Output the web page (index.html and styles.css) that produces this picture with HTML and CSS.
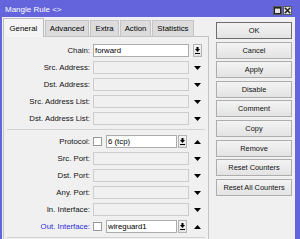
FILE: index.html
```html
<!DOCTYPE html>
<html>
<head>
<meta charset="utf-8">
<link rel="stylesheet" href="styles.css">
</head>
<body>
<div class="win">
  <div class="titlebar">
    <span class="title">Mangle Rule &lt;&gt;</span>
    <span class="tbtns">
      <span class="tb"><svg width="7" height="7" viewBox="0 0 7 7"><rect x="0.5" y="0.5" width="6" height="6" fill="none" stroke="#222" stroke-width="1"/><rect x="0" y="0" width="7" height="1.6" fill="#222"/></svg></span>
      <span class="tb"><svg width="7" height="7" viewBox="0 0 7 7"><path d="M0.8 0.8 L6.2 6.2 M6.2 0.8 L0.8 6.2" stroke="#222" stroke-width="1.6"/></svg></span>
    </span>
  </div>
  <div class="main">
    <div class="left">
      <div class="tabs">
        <div class="tab sel">General</div>
        <div class="tab">Advanced</div>
        <div class="tab">Extra</div>
        <div class="tab">Action</div>
        <div class="tab">Statistics</div>
      </div>
      <div class="panel">
        <div class="row">
          <span class="lbl">Chain:</span>
          <span class="ctl"><span class="inp active">forward</span></span>
          <span class="side"><span class="box"><svg width="5" height="7" viewBox="0 0 5 7"><rect x="1.5" y="0" width="2" height="2" fill="#000"/><path d="M0 2 H5 L2.5 5 Z" fill="#000"/><rect x="0" y="6" width="5" height="1" fill="#000"/></svg></span></span>
        </div>
        <div class="row">
          <span class="lbl">Src. Address:</span>
          <span class="ctl"><span class="inp"></span></span>
          <span class="side"><svg class="arr" width="7" height="4" viewBox="0 0 7 4"><path d="M0 0 H7 L3.5 4 Z" fill="#000"/></svg></span>
        </div>
        <div class="row">
          <span class="lbl">Dst. Address:</span>
          <span class="ctl"><span class="inp"></span></span>
          <span class="side"><svg class="arr" width="7" height="4" viewBox="0 0 7 4"><path d="M0 0 H7 L3.5 4 Z" fill="#000"/></svg></span>
        </div>
        <div class="row">
          <span class="lbl">Src. Address List:</span>
          <span class="ctl"><span class="inp"></span></span>
          <span class="side"><svg class="arr" width="7" height="4" viewBox="0 0 7 4"><path d="M0 0 H7 L3.5 4 Z" fill="#000"/></svg></span>
        </div>
        <div class="row">
          <span class="lbl">Dst. Address List:</span>
          <span class="ctl"><span class="inp"></span></span>
          <span class="side"><svg class="arr" width="7" height="4" viewBox="0 0 7 4"><path d="M0 0 H7 L3.5 4 Z" fill="#000"/></svg></span>
        </div>
        <div class="sep"></div>
        <div class="row">
          <span class="lbl">Protocol:</span>
          <span class="ctl"><span class="chk"></span><span class="inp active short">6 (tcp)</span><span class="box"><svg width="5" height="7" viewBox="0 0 5 7"><rect x="1.5" y="0" width="2" height="2" fill="#000"/><path d="M0 2 H5 L2.5 5 Z" fill="#000"/><rect x="0" y="6" width="5" height="1" fill="#000"/></svg></span></span>
          <span class="side"><svg class="arr" width="7" height="4" viewBox="0 0 7 4"><path d="M0 4 H7 L3.5 0 Z" fill="#000"/></svg></span>
        </div>
        <div class="row">
          <span class="lbl">Src. Port:</span>
          <span class="ctl"><span class="inp"></span></span>
          <span class="side"><svg class="arr" width="7" height="4" viewBox="0 0 7 4"><path d="M0 0 H7 L3.5 4 Z" fill="#000"/></svg></span>
        </div>
        <div class="row">
          <span class="lbl">Dst. Port:</span>
          <span class="ctl"><span class="inp"></span></span>
          <span class="side"><svg class="arr" width="7" height="4" viewBox="0 0 7 4"><path d="M0 0 H7 L3.5 4 Z" fill="#000"/></svg></span>
        </div>
        <div class="row">
          <span class="lbl">Any. Port:</span>
          <span class="ctl"><span class="inp"></span></span>
          <span class="side"><svg class="arr" width="7" height="4" viewBox="0 0 7 4"><path d="M0 0 H7 L3.5 4 Z" fill="#000"/></svg></span>
        </div>
        <div class="row">
          <span class="lbl">In. Interface:</span>
          <span class="ctl"><span class="inp"></span></span>
          <span class="side"><svg class="arr" width="7" height="4" viewBox="0 0 7 4"><path d="M0 0 H7 L3.5 4 Z" fill="#000"/></svg></span>
        </div>
        <div class="row">
          <span class="lbl blue">Out. Interface:</span>
          <span class="ctl"><span class="chk"></span><span class="inp active short">wireguard1</span><span class="box"><svg width="5" height="7" viewBox="0 0 5 7"><rect x="1.5" y="0" width="2" height="2" fill="#000"/><path d="M0 2 H5 L2.5 5 Z" fill="#000"/><rect x="0" y="6" width="5" height="1" fill="#000"/></svg></span></span>
          <span class="side"><svg class="arr" width="7" height="4" viewBox="0 0 7 4"><path d="M0 4 H7 L3.5 0 Z" fill="#000"/></svg></span>
        </div>
        <div class="sep"></div>
      </div>
    </div>
    <div class="btns">
      <div class="btn def">OK</div>
      <div class="btn">Cancel</div>
      <div class="btn">Apply</div>
      <div class="btn">Disable</div>
      <div class="btn">Comment</div>
      <div class="btn">Copy</div>
      <div class="btn">Remove</div>
      <div class="btn">Reset Counters</div>
      <div class="btn">Reset All Counters</div>
    </div>
  </div>
</div>
</body>
</html>
```
FILE: styles.css
```css
html, body {
  margin: 0;
  padding: 0;
  background: #f0f0f0;
}
body {
  font-family: "Liberation Sans", Arial, sans-serif;
  font-size: 7.8px;
  color: #000;
}
.win {
  width: 300px;
  height: 239px;
  box-sizing: border-box;
  background: #6464dc;
  padding: 0 5px 0 2px;
  display: flex;
  flex-direction: column;
  overflow: hidden;
}
.titlebar {
  height: 17px;
  flex: none;
  display: flex;
  align-items: center;
  padding: 0 3px;
  color: #fff;
  font-size: 8px;
}
.title {
  flex: 1;
  padding-top: 1px;
}
.tbtns {
  display: flex;
  gap: 1px;
  margin-top: 3px;
}
.tb {
  width: 9px;
  height: 9px;
  box-sizing: border-box;
  background: #e4e4e4;
  border: 1px solid #5a5a5a;
  display: flex;
  align-items: center;
  justify-content: center;
}
.main {
  flex: 1;
  background: #f0f0f0;
  display: flex;
  min-height: 0;
}
.left {
  width: 206px;
  margin-left: 1px;
  display: flex;
  flex-direction: column;
}
.tabs {
  height: 19px;
  flex: none;
  display: flex;
  align-items: flex-end;
}
.tab {
  height: 16px;
  box-sizing: border-box;
  padding: 0 4px;
  border: 1px solid #c4c4c4;
  border-bottom: none;
  background: #dcdcdc;
  display: flex;
  align-items: center;
}
.tab.sel {
  height: 19px;
  padding: 0 5.5px;
  background: #f4f4f4;
  margin-bottom: -1px;
  position: relative;
  z-index: 1;
  border-color: #bdbdbd;
}
.tab + .tab {
  margin-left: 1px;
}
.panel {
  flex: 1;
  border: 1px solid #c4c4c4;
  border-bottom: none;
  background: #f0f0f0;
  padding-top: 5px;
}
.row {
  height: 17px;
  display: flex;
  align-items: center;
}
.lbl {
  width: 89px;
  box-sizing: border-box;
  padding-right: 3px;
  text-align: right;
  white-space: nowrap;
  color: #111;
}
.lbl.blue {
  color: #2b2bdc;
}
.ctl {
  width: 96px;
  display: flex;
  align-items: center;
}
.inp {
  flex: 1;
  height: 13px;
  box-sizing: border-box;
  border: 1px solid #cdcdcd;
  background: #f0f0f0;
  padding-left: 1px;
  display: flex;
  align-items: center;
  white-space: nowrap;
}
.inp.active {
  background: #fff;
  border-color: #acacac;
}
.inp.short {
  flex: none;
  width: 71px;
  margin-right: 1px;
}
.chk {
  width: 9px;
  height: 9px;
  box-sizing: border-box;
  border: 1px solid #9a9a9a;
  background: #fff;
  margin-right: 4px;
}
.side {
  width: 10px;
  margin-left: 3px;
  display: flex;
  justify-content: center;
  align-items: center;
}
.box {
  width: 9px;
  height: 13px;
  box-sizing: border-box;
  border: 1px solid #b4b4b4;
  background: linear-gradient(#f4f4f4, #e2e2e2);
  display: flex;
  align-items: center;
  justify-content: center;
}
.arr {
  display: block;
}
.sep {
  height: 1px;
  background: #d2d2d2;
  margin: 2px 3px 3px 3px;
}
.btns {
  width: 76px;
  margin-left: 7px;
  padding-top: 5px;
  display: flex;
  flex-direction: column;
  gap: 2.6px;
  font-size: 7.4px;
}
.btn {
  height: 17px;
  box-sizing: border-box;
  border: 1px solid #adadad;
  background: linear-gradient(#f3f3f3, #e3e3e3);
  display: flex;
  align-items: center;
  justify-content: center;
  white-space: nowrap;
  color: #111;
}
.btn.def {
  border-color: #6e6e6e;
}
```
